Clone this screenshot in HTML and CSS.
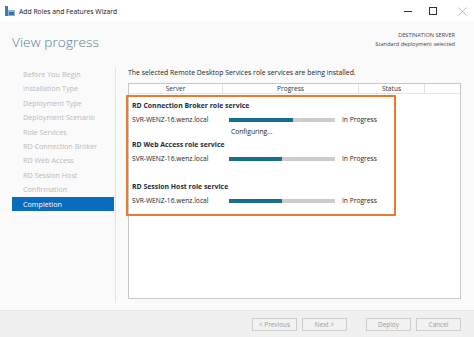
FILE: index.html
```html
<!DOCTYPE html>
<html lang="en">
<head>
  <meta charset="UTF-8" />
  <title>Add Roles and Features Wizard</title>
  <link rel="stylesheet" href="styles.css">
</head>
<body>
  <div class="window">
    <div class="titlebar">
      <svg class="app-icon" width="10" height="10" viewBox="0 0 10 10">
        <rect x="0" y="0" width="3" height="10" fill="#2f7fc4"/>
        <rect x="3" y="4" width="7" height="6" fill="#8fb3d3"/>
        <rect x="4" y="6" width="5" height="3" fill="#3a6fa0"/>
      </svg>
      <span class="title">Add Roles and Features Wizard</span>
      <div class="controls">
        <span class="ctl min"></span>
        <span class="ctl max"></span>
        <svg class="ctl close" width="9" height="9" viewBox="0 0 9 9">
          <path d="M0.5 0.5 L8.5 8.5 M8.5 0.5 L0.5 8.5" stroke="#a8a8a8" stroke-width="0.8"/>
        </svg>
      </div>
    </div>

    <div class="header">
      <h1>View progress</h1>
      <div class="dest">
        <div>DESTINATION SERVER</div>
        <div>Standard deployment selected</div>
      </div>
    </div>

    <div class="body">
      <ul class="nav">
        <li>Before You Begin</li>
        <li>Installation Type</li>
        <li>Deployment Type</li>
        <li>Deployment Scenario</li>
        <li>Role Services</li>
        <li>RD Connection Broker</li>
        <li>RD Web Access</li>
        <li>RD Session Host</li>
        <li>Confirmation</li>
        <li class="active">Completion</li>
      </ul>

      <div class="content">
        <p class="intro">The selected Remote Desktop Services role services are being installed.</p>
        <div class="table">
          <div class="thead">
            <div class="th server">Server</div>
            <div class="th progress">Progress</div>
            <div class="th status">Status</div>
            <div class="th blank"></div>
          </div>
          <div class="tbody">
            <div class="highlight">
              <div class="group">
                <div class="group-title">RD Connection Broker role service</div>
                <div class="row">
                  <span class="cell-server">SVR-WENZ-16.wenz.local</span>
                  <span class="bar"><span class="fill" style="width: 60%"></span></span>
                  <span class="cell-status">In Progress</span>
                </div>
                <div class="note">Configuring...</div>
              </div>
              <div class="group">
                <div class="group-title">RD Web Access role service</div>
                <div class="row">
                  <span class="cell-server">SVR-WENZ-16.wenz.local</span>
                  <span class="bar"><span class="fill" style="width: 50%"></span></span>
                  <span class="cell-status">In Progress</span>
                </div>
              </div>
              <div class="group spaced">
                <div class="group-title">RD Session Host role service</div>
                <div class="row">
                  <span class="cell-server">SVR-WENZ-16.wenz.local</span>
                  <span class="bar"><span class="fill" style="width: 50%"></span></span>
                  <span class="cell-status">In Progress</span>
                </div>
              </div>
            </div>
          </div>
        </div>
      </div>
    </div>

    <div class="footer">
      <button class="btn">&lt; Previous</button>
      <button class="btn">Next &gt;</button>
      <button class="btn gap">Deploy</button>
      <button class="btn">Cancel</button>
    </div>
  </div>
</body>
</html>
```

FILE: styles.css
```css
* { box-sizing: border-box; }
body {
  margin: 0;
  font-family: 'Open Sans', 'Noto Sans', sans-serif;
  color: #222;
  background: #fff;
}
.window {
  width: 474px;
  height: 337px;
  display: flex;
  flex-direction: column;
  background: #fafafa;
}
.titlebar {
  height: 22px;
  background: #fff;
  display: flex;
  align-items: center;
  padding-left: 5px;
}
.app-icon { margin-right: 4px; }
.title {
  font-size: 6.8px;
  color: #111;
}
.controls {
  margin-left: auto;
  display: flex;
  align-items: center;
}
.ctl { display: block; }
.min {
  width: 8px;
  height: 1px;
  background: #333;
  margin-right: 17px;
}
.max {
  width: 8px;
  height: 8px;
  border: 1px solid #333;
  margin-right: 21px;
}
.close { margin-right: 7px; }

.header {
  height: 42px;
  display: flex;
  justify-content: space-between;
  align-items: flex-start;
  padding: 0 19px 0 12px;
}
h1 {
  margin: 10px 0 0;
  font-size: 13.6px;
  font-weight: 300;
  color: #5b7a93;
  letter-spacing: 0.1px;
}
.dest {
  margin-top: 9px;
  font-size: 5.6px;
  line-height: 9px;
  text-align: right;
  color: #444;
}

.body {
  flex: 1;
  display: flex;
  min-height: 0;
}
.nav {
  list-style: none;
  margin: 3px 0 0 12px;
  padding: 0;
  width: 104px;
  border-right: 1px solid #e2e2e2;
  height: 236px;
}
.nav li {
  height: 14.4px;
  line-height: 14.4px;
  padding-left: 11px;
  font-size: 7.2px;
  color: #b9b9b9;
  margin-right: 1px;
}
.nav li.active {
  background: #0a6cbf;
  color: #fff;
}

.content {
  flex: 1;
  padding-left: 12px;
  padding-right: 13px;
}
.intro {
  margin: 4px 0 0;
  font-size: 6.9px;
  line-height: 9px;
  color: #222;
}
.table {
  margin-top: 6px;
  height: 216px;
  border: 1px solid #c8c8c8;
  background: #fff;
}
.thead {
  display: flex;
  height: 10px;
  border-bottom: 1px solid #e6e6e6;
}
.th {
  font-size: 6.6px;
  line-height: 9px;
  text-align: center;
  color: #333;
  border-right: 1px solid #e0e0e0;
}
.th.server { width: 94px; }
.th.progress { width: 136px; }
.th.status { width: 66px; }
.th.blank { flex: 1; border-right: none; }

.tbody { padding: 1px 0 0 0; }
.highlight {
  margin-left: -3px;
  width: 270px;
  height: 121px;
  border: 2.5px solid #ec7a2c;
  padding: 0 0 0 4px;
}
.group-title {
  font-size: 6.9px;
  font-weight: 700;
  color: #1d2a3a;
  margin-top: 4px;
  line-height: 10px;
}
.group.spaced { margin-top: 16px; }
.row {
  display: flex;
  align-items: center;
  height: 15px;
  margin-top: 1px;
}
.cell-server {
  width: 97px;
  font-size: 6.7px;
  color: #222;
}
.bar {
  width: 106px;
  height: 4px;
  background: #cccccc;
  display: flex;
}
.fill {
  height: 100%;
  background: #176f8e;
}
.cell-status {
  margin-left: 7px;
  font-size: 6.7px;
  color: #222;
}
.note {
  font-size: 6.7px;
  color: #222;
  padding-left: 99px;
  line-height: 9px;
}

.footer {
  height: 27px;
  background: #f0f0f0;
  border-top: 1px solid #e6e6e6;
  display: flex;
  align-items: center;
  justify-content: flex-end;
  padding-right: 13px;
}
.btn {
  width: 45px;
  height: 13px;
  margin-left: 5px;
  padding: 0;
  font-family: inherit;
  font-size: 6.4px;
  color: #9a9a9a;
  background: #f2f2f2;
  border: 1px solid #cdcdcd;
}
.btn.gap { margin-left: 19px; }
```
